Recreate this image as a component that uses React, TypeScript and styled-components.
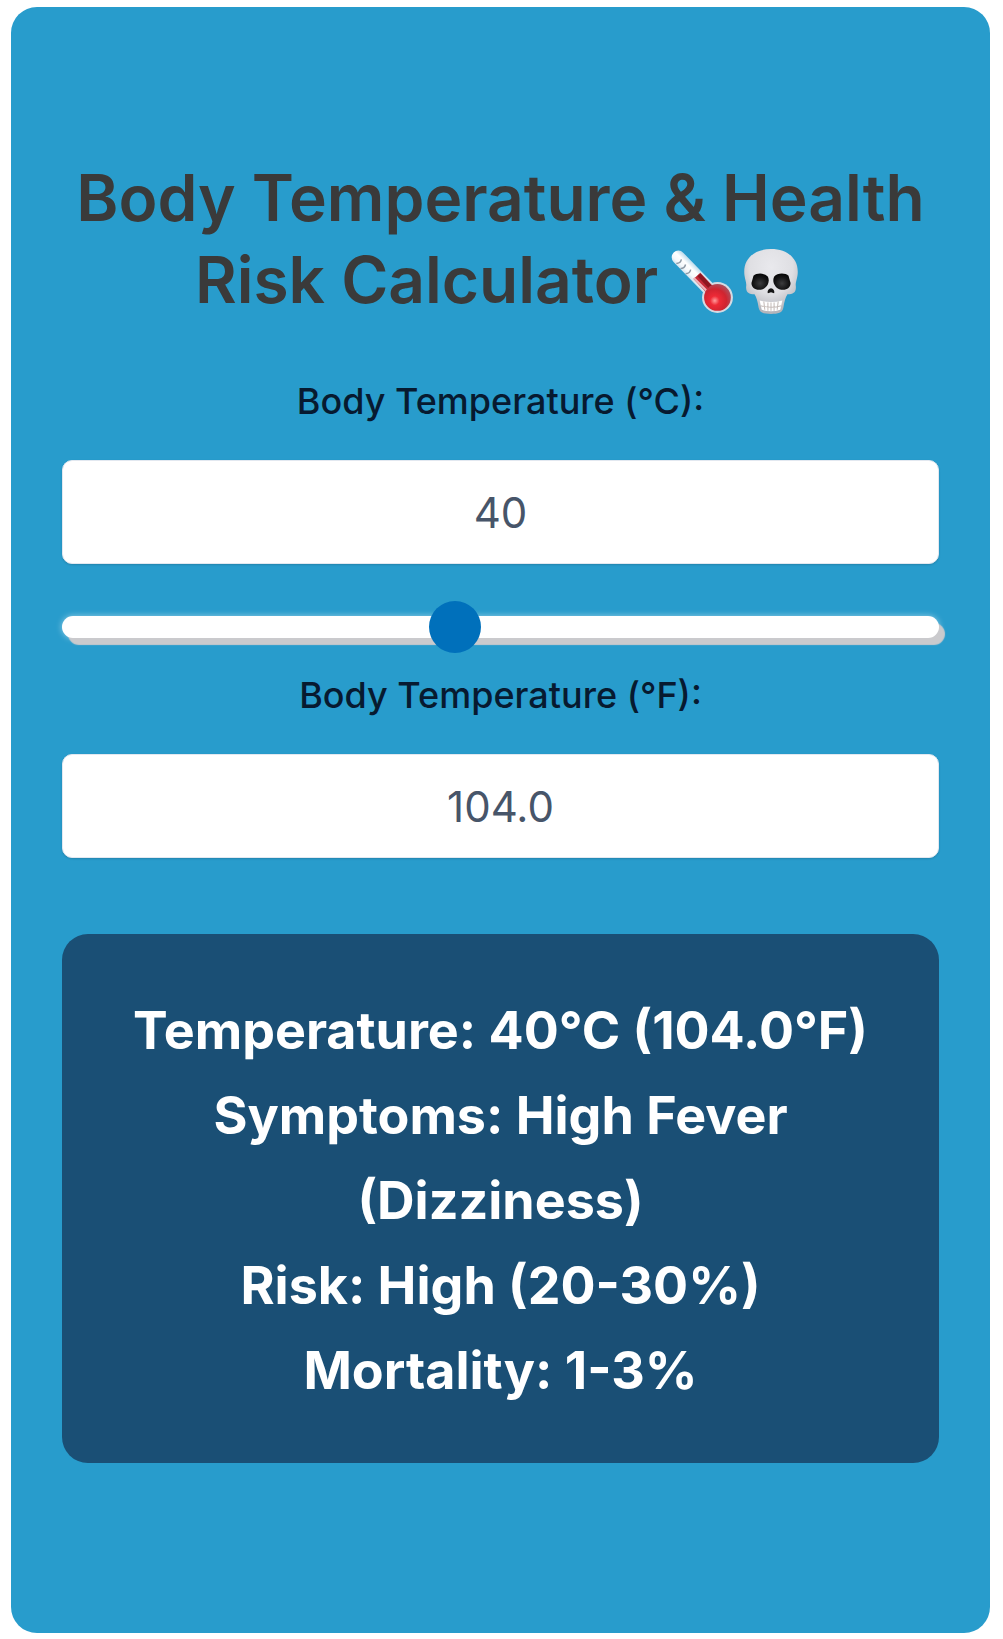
import React, { useState } from 'react';
import styled, { createGlobalStyle } from 'styled-components';

const GlobalStyle = createGlobalStyle`
  *, *::before, *::after { box-sizing: border-box; }
  body {
    margin: 0;
    background: #ffffff;
    font-family: Inter, "Liberation Sans", sans-serif;
  }
`;

const Page = styled.main`
  padding: 7px 13px 6px 11px;
`;

const Card = styled.section`
  display: flex;
  flex-direction: column;
  padding: 150px 51px 170px;
  border-radius: 26px;
  background: #289ccc;
`;

const Title = styled.h1`
  margin: 0 0 53px;
  color: #3a3a3a;
  font-size: 64px;
  font-weight: 600;
  line-height: 82px;
  text-align: center;
`;

const EmojiPair = styled.span`
  margin-left: 8px;
  white-space: nowrap;
`;

const Emoji = styled.svg`
  width: 70px;
  height: 70px;
  vertical-align: -14px;
`;

const Field = styled.div`
  display: flex;
  flex-direction: column;
  gap: 32px;
`;

const Label = styled.label`
  color: #071a30;
  font-size: 36px;
  font-weight: 500;
  line-height: 54px;
  text-align: center;
`;

const NumberBox = styled.input`
  width: 100%;
  height: 104px;
  padding: 0 24px;
  border: 1px solid #e2e8f0;
  border-radius: 10px;
  background: #ffffff;
  box-shadow: 0 1px 2px rgba(0, 0, 0, 0.15);
  color: #475569;
  font-family: inherit;
  font-size: 42px;
  text-align: center;
`;

const Slider = styled.input`
  appearance: none;
  width: 100%;
  height: 52px;
  margin: 37px 0 15px;
  background: transparent;
  cursor: pointer;

  &::-webkit-slider-runnable-track {
    height: 22px;
    border-radius: 11px;
    background: #ffffff;
    box-shadow: 6px 7px 1px #cacacd, 0 0 6px rgba(255, 255, 255, 0.5);
  }

  &::-webkit-slider-thumb {
    appearance: none;
    width: 52px;
    height: 52px;
    margin-top: -15px;
    border-radius: 50%;
    background: #0070bb;
  }
`;

const Result = styled.output`
  display: block;
  margin-top: 76px;
  padding: 54px 52px 50px;
  border-radius: 26px;
  background: #1a4f75;
  color: #ffffff;
  font-size: 52px;
  font-weight: 700;
  line-height: 85px;
  text-align: center;
`;

const ResultLine = styled.div``;

function Thermometer() {
  return (
    <Emoji viewBox="0 0 68 68" role="img" aria-label="thermometer">
      <defs>
        <linearGradient id="glass" gradientUnits="userSpaceOnUse" x1="22" y1="32" x2="32" y2="22">
          <stop offset="0" stopColor="#b9d6e6" />
          <stop offset="0.35" stopColor="#f4f8fb" />
          <stop offset="0.7" stopColor="#ffffff" />
          <stop offset="1" stopColor="#c6e0ee" />
        </linearGradient>
        <radialGradient id="bulb" cx="0.4" cy="0.62" r="0.62">
          <stop offset="0" stopColor="#ff9c9c" />
          <stop offset="0.28" stopColor="#ee2a36" />
          <stop offset="0.7" stopColor="#cf2430" />
          <stop offset="1" stopColor="#b04a58" />
        </radialGradient>
      </defs>
      <path d="M12 10 L46 45" stroke="url(#glass)" strokeWidth="13" strokeLinecap="round" />
      <circle cx="50" cy="49" r="15" fill="#d5dbe3" />
      <path d="M30 28 L46 45" stroke="#c42a38" strokeWidth="9" />
      <path d="M32 27 L44 40" stroke="#8e1721" strokeWidth="4" />
      <path d="M27 30 L40 43" stroke="#f0b4bb" strokeWidth="2" />
      <circle cx="50" cy="49" r="13" fill="url(#bulb)" />
      <path d="M10 16 q4 0 5 -4 M14 21 q4 0 5 -4 M19 26 q4 0 5 -4" fill="none" stroke="#8d99a5" strokeWidth="1.4" />
    </Emoji>
  );
}

function Skull() {
  return (
    <Emoji viewBox="0 0 68 68" role="img" aria-label="skull">
      <defs>
        <radialGradient id="bone" cx="0.5" cy="0.28" r="0.68">
          <stop offset="0" stopColor="#e9e9ed" />
          <stop offset="0.6" stopColor="#dfdfe3" />
          <stop offset="1" stopColor="#b4b5bb" />
        </radialGradient>
        <radialGradient id="socket" cx="0.5" cy="0.6" r="0.6">
          <stop offset="0" stopColor="#3c3c3e" />
          <stop offset="0.6" stopColor="#171718" />
          <stop offset="1" stopColor="#060606" />
        </radialGradient>
      </defs>
      <path
        d="M34 2 C50 2 60 11 60 24 C60 30 58 33 58 37 C59 44 56 46 50 46 C48 49 47 53 46 59 C45 64 41 65 34 65 C27 65 23 64 22 59 C21 53 20 49 18 46 C12 46 9 44 10 37 C10 33 8 30 8 24 C8 11 18 2 34 2 Z"
        fill="url(#bone)"
      />
      <path d="M17 28 C20 25 28 25 31 29 C33 33 31 39 26 41 C20 43 15 40 15 35 Z" fill="url(#socket)" />
      <path d="M51 28 C48 25 40 25 37 29 C35 33 37 39 42 41 C48 43 53 40 53 35 Z" fill="url(#socket)" />
      <path d="M34 40 C36 40 38 43 37 45 L34 44 L31 45 C30 43 32 40 34 40 Z" fill="#151515" />
      <path d="M23 52 Q34 55 45 52 L43 61 Q34 64 25 61 Z" fill="#ffffff" />
      <path d="M24 57 Q34 60 44 57 M27 53 L28 61 M31 54 V62 M34 54 V62 M37 54 V62 M41 53 L40 61" fill="none" stroke="#c4bbb7" strokeWidth="1" />
    </Emoji>
  );
}

function assess(celsius: number) {
  if (celsius < 35) return { symptoms: 'Hypothermia (Shivering)', risk: 'High (20-30%)', mortality: '1-3%' };
  if (celsius < 37.5) return { symptoms: 'Normal', risk: 'Low (0-1%)', mortality: '0%' };
  if (celsius < 39.5) return { symptoms: 'Fever (Fatigue)', risk: 'Moderate (5-10%)', mortality: '0-1%' };
  if (celsius < 41) return { symptoms: 'High Fever (Dizziness)', risk: 'High (20-30%)', mortality: '1-3%' };
  return { symptoms: 'Severe Fever (Delirium)', risk: 'Critical (50-80%)', mortality: '10-50%' };
}

const toFahrenheit = (c: number) => ((c * 9) / 5 + 32).toFixed(1);

export default function App() {
  const [celsius, setCelsius] = useState('40');
  const [fahrenheit, setFahrenheit] = useState('104.0');

  const changeCelsius = (value: string) => {
    setCelsius(value);
    setFahrenheit(toFahrenheit(Number(value)));
  };

  const changeFahrenheit = (value: string) => {
    setFahrenheit(value);
    setCelsius(String(Math.round(((Number(value) - 32) * 50) / 9) / 10));
  };

  const { symptoms, risk, mortality } = assess(Number(celsius));
  const lines = [
    `Temperature: ${celsius}°C (${fahrenheit}°F)`,
    `Symptoms: ${symptoms}`,
    `Risk: ${risk}`,
    `Mortality: ${mortality}`,
  ];

  return (
    <>
      <GlobalStyle />
      <Page>
        <Card>
          <Title>
            Body Temperature &amp; Health Risk Calculator<EmojiPair><Thermometer /><Skull /></EmojiPair>
          </Title>
          <Field>
            <Label htmlFor="celsius">Body Temperature (°C):</Label>
            <NumberBox id="celsius" inputMode="decimal" value={celsius} onChange={(e) => changeCelsius(e.target.value)} />
          </Field>
          <Slider
            type="range"
            min="32"
            max="50"
            step="0.1"
            aria-label="Body temperature in Celsius"
            value={celsius}
            onChange={(e) => changeCelsius(e.target.value)}
          />
          <Field>
            <Label htmlFor="fahrenheit">Body Temperature (°F):</Label>
            <NumberBox id="fahrenheit" inputMode="decimal" value={fahrenheit} onChange={(e) => changeFahrenheit(e.target.value)} />
          </Field>
          <Result htmlFor="celsius fahrenheit">
            {lines.map((line) => (
              <ResultLine key={line}>{line}</ResultLine>
            ))}
          </Result>
        </Card>
      </Page>
    </>
  );
}
